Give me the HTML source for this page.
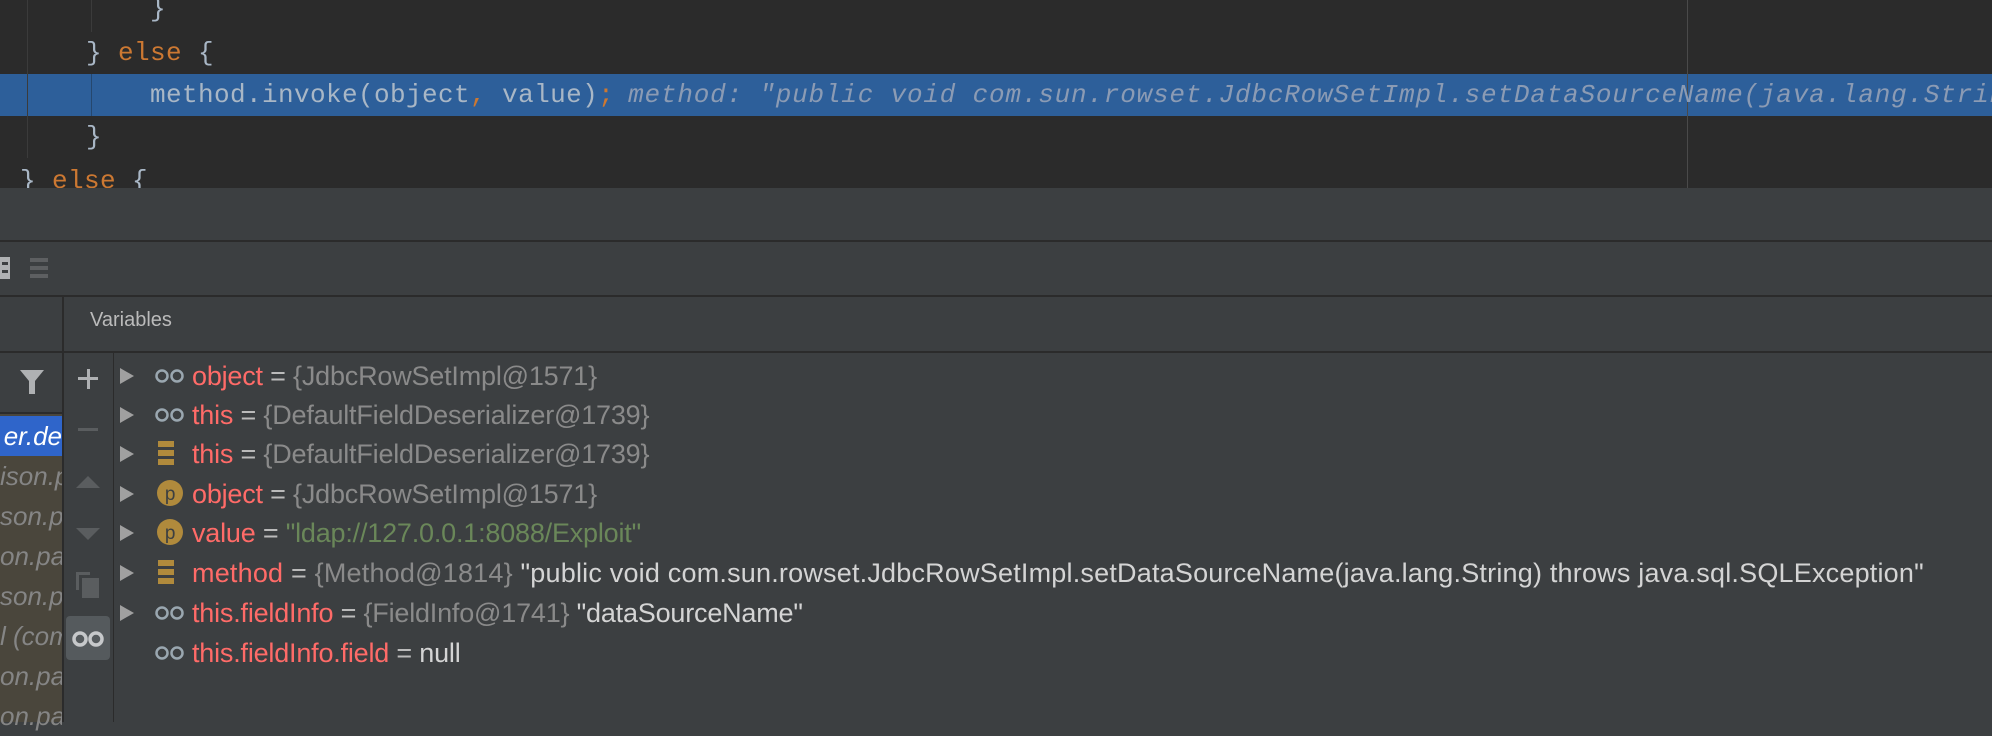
<!DOCTYPE html>
<html><head><meta charset="utf-8"><style>
*{margin:0;padding:0;box-sizing:border-box}
body{width:1992px;height:722px;overflow:hidden;background:#3c3f41;position:relative;font-family:"Liberation Sans",sans-serif}
.abs{position:absolute}
.code{left:0;top:0;width:1992px;height:188px;background:#2b2b2b;overflow:hidden}
.cl{position:absolute;left:0;height:42px;line-height:42px;font-family:"Liberation Mono",monospace;font-size:26px;letter-spacing:0.4px;color:#a9b7c6;white-space:nowrap}
.kw{color:#cc7832}
.hint{color:#8b9bb4;font-style:italic;letter-spacing:0.8px;margin-left:14px}
.row{position:absolute;left:120px;height:40px;line-height:40px;font-size:27px;white-space:nowrap;color:#bbbbbb;letter-spacing:-0.2px}
.tri{position:absolute;left:0;top:12px;width:0;height:0;border-top:8px solid transparent;border-bottom:8px solid transparent;border-left:14px solid #a0a0a0}
.n{color:#ff6b68}.g{color:#8a8a8a}.s{color:#6a8759}.w{color:#d4d4d4}
.ico{position:absolute;left:34px;top:8px}
.fr{position:absolute;left:0;width:62px;height:40px;line-height:40px;font-style:italic;font-size:26px;color:#858585;white-space:nowrap;overflow:hidden;text-align:right}
</style></head><body>
<div class="abs code">
  <div class="abs" style="left:0;top:74px;width:1992px;height:42px;background:#2d5f9a"></div>
  <div class="abs" style="left:27px;top:0;width:1px;height:158px;background:#3b3b3b"></div>
  <div class="abs" style="left:91px;top:0;width:1px;height:32px;background:#3b3b3b"></div>
  <div class="abs" style="left:91px;top:74px;width:1px;height:42px;background:#25476e"></div>
  <div class="abs" style="left:1687px;top:0;width:1px;height:188px;background:#4a4a4a"></div>
  <div class="cl" style="top:-12px;left:150px">}</div>
  <div class="cl" style="top:32px;left:86px">} <span class="kw">else</span> {</div>
  <div class="cl" style="top:74px;left:150px">method.invoke(object<span class="kw">,</span> value)<span class="kw">;</span><span class="hint">method: "public void com.sun.rowset.JdbcRowSetImpl.setDataSourceName(java.lang.String) throws java.sql.SQLException"</span></div>
  <div class="cl" style="top:116px;left:86px">}</div>
  <div class="cl" style="top:160px;left:20px">} <span class="kw">else</span> {</div>
</div>
<div class="abs" style="left:0;top:240px;width:1992px;height:2px;background:#2b2b2b"></div>
<div class="abs" style="left:0;top:257px;width:10px;height:22px;background:#afb1b3"></div>
<div class="abs" style="left:2px;top:262px;width:6px;height:3px;background:#3c3f41"></div>
<div class="abs" style="left:2px;top:270px;width:6px;height:3px;background:#3c3f41"></div>
<div class="abs" style="left:30px;top:258px;width:18px;height:4px;background:#5d5f61"></div>
<div class="abs" style="left:30px;top:266px;width:18px;height:4px;background:#5d5f61"></div>
<div class="abs" style="left:30px;top:274px;width:18px;height:4px;background:#5d5f61"></div>
<div class="abs" style="left:0;top:295px;width:1992px;height:2px;background:#2b2b2b"></div>
<div class="abs" style="left:62px;top:295px;width:2px;height:427px;background:#2b2b2b"></div>
<div class="abs" style="left:90px;top:309px;font-size:20px;color:#bbbbbb">Variables</div>
<div class="abs" style="left:0;top:351px;width:1992px;height:2px;background:#2b2b2b"></div>
<div class="abs" style="left:113px;top:353px;width:1px;height:369px;background:#2b2b2b"></div>
<svg class="abs" style="left:20px;top:370px" width="24" height="24"><path d="M0 0H24L15 11V24H9V11Z" fill="#afb1b3"/></svg>
<div class="abs" style="left:0;top:412px;width:62px;height:2px;background:#2b2b2b"></div>
<div class="abs" style="left:0;top:414px;width:62px;height:308px;background:#4a463c"></div>
<div class="fr" style="top:416px;background:#2f65ca;color:#fff">er.de</div>
<div class="fr" style="top:456px">ison.p</div>
<div class="fr" style="top:496px">son.pa</div>
<div class="fr" style="top:536px">on.par</div>
<div class="fr" style="top:576px">son.pa</div>
<div class="fr" style="top:616px">l (com</div>
<div class="fr" style="top:656px">on.par</div>
<div class="fr" style="top:696px">on.pa</div>
<div class="abs" style="left:78px;top:377px;width:20px;height:3px;background:#afb1b3"></div>
<div class="abs" style="left:86.5px;top:369px;width:3px;height:20px;background:#afb1b3"></div>
<div class="abs" style="left:78px;top:428px;width:20px;height:3px;background:#5a5d5f"></div>
<div class="abs" style="left:76px;top:476px;border-left:12px solid transparent;border-right:12px solid transparent;border-bottom:12px solid #5a5d5f"></div>
<div class="abs" style="left:76px;top:528px;border-left:12px solid transparent;border-right:12px solid transparent;border-top:12px solid #5a5d5f"></div>
<div class="abs" style="left:76px;top:572px;width:14px;height:18px;border:3px solid #5a5d5f;border-right:none;border-bottom:none"></div>
<div class="abs" style="left:82px;top:578px;width:17px;height:20px;background:#5a5d5f"></div>
<div class="abs" style="left:66px;top:616px;width:44px;height:44px;background:#555a5d;border-radius:4px"></div>
<svg class="abs" style="left:71px;top:628px" width="34" height="20"><circle cx="9" cy="11" r="6" fill="none" stroke="#c6c8ca" stroke-width="3.5"/><circle cx="25" cy="11" r="6" fill="none" stroke="#c6c8ca" stroke-width="3.5"/></svg>
<div class="row" style="top:356px"><div class="tri"></div><svg class="ico" width="34" height="20" style="top:11px"><circle cx="8" cy="9" r="5.5" fill="none" stroke="#9aa7b0" stroke-width="2.5"/><circle cx="23" cy="9" r="5.5" fill="none" stroke="#9aa7b0" stroke-width="2.5"/></svg><span style="position:absolute;left:72px"><span class="n">object</span> = <span class="g">{JdbcRowSetImpl@1571}</span></span></div>
<div class="row" style="top:395px"><div class="tri"></div><svg class="ico" width="34" height="20" style="top:11px"><circle cx="8" cy="9" r="5.5" fill="none" stroke="#9aa7b0" stroke-width="2.5"/><circle cx="23" cy="9" r="5.5" fill="none" stroke="#9aa7b0" stroke-width="2.5"/></svg><span style="position:absolute;left:72px"><span class="n">this</span> = <span class="g">{DefaultFieldDeserializer@1739}</span></span></div>
<div class="row" style="top:434px"><div class="tri"></div><svg class="ico" width="34" height="26" style="top:7px;left:38px"><rect x="0" y="0" width="16" height="6" fill="#b08a3c"/><rect x="0" y="9" width="16" height="6" fill="#b08a3c"/><rect x="0" y="18" width="16" height="6" fill="#b08a3c"/></svg><span style="position:absolute;left:72px"><span class="n">this</span> = <span class="g">{DefaultFieldDeserializer@1739}</span></span></div>
<div class="row" style="top:474px"><div class="tri"></div><svg class="ico" width="30" height="30" style="top:5px;left:36px"><circle cx="14" cy="14" r="13" fill="#b08a3c"/><text x="14" y="21" font-size="19" text-anchor="middle" fill="#3c3f41" font-family="Liberation Sans">p</text></svg><span style="position:absolute;left:72px"><span class="n">object</span> = <span class="g">{JdbcRowSetImpl@1571}</span></span></div>
<div class="row" style="top:513px"><div class="tri"></div><svg class="ico" width="30" height="30" style="top:5px;left:36px"><circle cx="14" cy="14" r="13" fill="#b08a3c"/><text x="14" y="21" font-size="19" text-anchor="middle" fill="#3c3f41" font-family="Liberation Sans">p</text></svg><span style="position:absolute;left:72px"><span class="n">value</span> = <span class="s">"ldap://127.0.0.1:8088/Exploit"</span></span></div>
<div class="row" style="top:553px"><div class="tri"></div><svg class="ico" width="34" height="26" style="top:7px;left:38px"><rect x="0" y="0" width="16" height="6" fill="#b08a3c"/><rect x="0" y="9" width="16" height="6" fill="#b08a3c"/><rect x="0" y="18" width="16" height="6" fill="#b08a3c"/></svg><span style="position:absolute;left:72px;letter-spacing:0.2px"><span class="n">method</span> = <span class="g">{Method@1814}</span> <span class="w">"public void com.sun.rowset.JdbcRowSetImpl.setDataSourceName(java.lang.String) throws java.sql.SQLException"</span></span></div>
<div class="row" style="top:593px"><div class="tri"></div><svg class="ico" width="34" height="20" style="top:11px"><circle cx="8" cy="9" r="5.5" fill="none" stroke="#9aa7b0" stroke-width="2.5"/><circle cx="23" cy="9" r="5.5" fill="none" stroke="#9aa7b0" stroke-width="2.5"/></svg><span style="position:absolute;left:72px"><span class="n">this.fieldInfo</span> = <span class="g">{FieldInfo@1741}</span> <span class="w">"dataSourceName"</span></span></div>
<div class="row" style="top:633px"><svg class="ico" width="34" height="20" style="top:11px"><circle cx="8" cy="9" r="5.5" fill="none" stroke="#9aa7b0" stroke-width="2.5"/><circle cx="23" cy="9" r="5.5" fill="none" stroke="#9aa7b0" stroke-width="2.5"/></svg><span style="position:absolute;left:72px"><span class="n">this.fieldInfo.field</span> = <span class="w">null</span></span></div>
</body></html>
